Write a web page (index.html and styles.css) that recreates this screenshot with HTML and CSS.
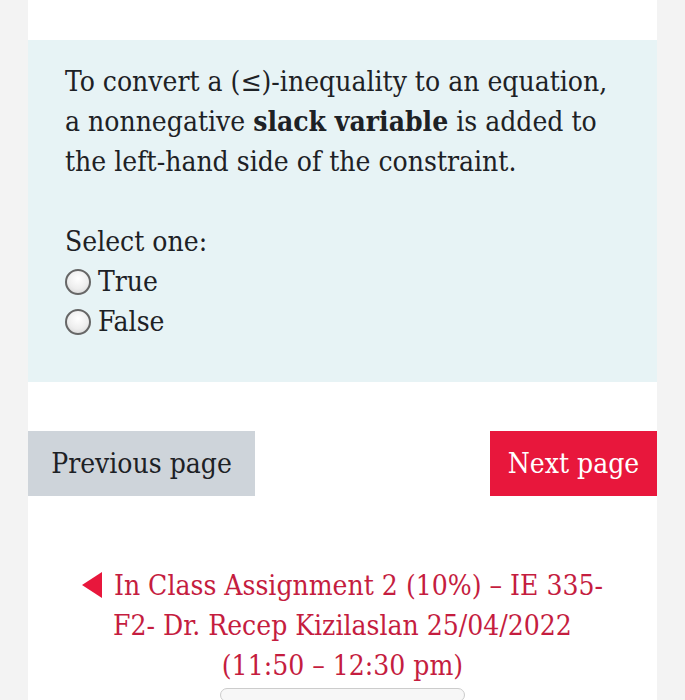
FILE: index.html
```html
<!DOCTYPE html>
<html>
<head>
<meta charset="utf-8">
<link rel="stylesheet" href="styles.css">
</head>
<body>
<div class="page">
  <div class="top"></div>
  <div class="question">
    <p class="qtext">To convert a (≤)-inequality to an equation, a nonnegative <b>slack variable</b> is added to the left-hand side of the constraint.</p>
    <div class="prompt">Select one:</div>
    <label class="opt"><span class="radio"></span>True</label>
    <label class="opt"><span class="radio"></span>False</label>
  </div>
  <div class="nav">
    <button class="btn prev">Previous page</button>
    <button class="btn next">Next page</button>
  </div>
  <div class="back">
    <span class="tri"></span> In Class Assignment 2 (10%) – IE 335-F2- Dr. Recep Kizilaslan 25/04/2022 (11:50 – 12:30 pm)
  </div>
  <div class="pill"></div>
</div>
</body>
</html>
```

FILE: styles.css
```css
html, body { margin: 0; padding: 0; }
body {
  background: #f3f3f3;
  font-family: "DejaVu Serif Condensed", "DejaVu Serif", serif;
  color: #1d2125;
  height: 700px;
  overflow: hidden;
}
.page {
  margin: 0 28px;
  background: #fff;
  height: 700px;
  display: flex;
  flex-direction: column;
}
.top { height: 40px; flex: none; }
.question {
  flex: none;
  background: #e7f3f5;
  height: 342px;
  box-sizing: border-box;
  padding: 22px 30px 0 37px;
  font-size: 28px;
  line-height: 40px;
}
.qtext { margin: 0 0 40px 0; }
.qtext b { font-weight: bold; }
.opt { display: flex; align-items: center; gap: 7px; }
.radio {
  width: 26px; height: 26px; box-sizing: border-box;
  border: 2px solid #666;
  border-radius: 50%;
  background: radial-gradient(circle at 50% 35%, #fff 0%, #eee 55%, #d0d0d0 100%);
}
.nav {
  flex: none;
  display: flex;
  justify-content: space-between;
  margin-top: 49px;
}
.btn {
  font-family: inherit;
  font-size: 28px;
  border: none;
  height: 65px;
  padding: 0;
}
.prev { background: #ced4da; color: #1d2125; width: 227px; }
.next { background: #e8173c; color: #fff; width: 167px; }
.back {
  flex: none;
  margin: 70px auto 0;
  width: 540px;
  text-align: center;
  color: #c51d3f;
  font-size: 28px;
  line-height: 40px;
}
.tri {
  display: inline-block;
  width: 0; height: 0;
  border-top: 13px solid transparent;
  border-bottom: 13px solid transparent;
  border-right: 20px solid #e8173c;
  vertical-align: -3px;
  margin-right: 4px;
}
.pill {
  flex: none;
  margin: 2px auto 0;
  width: 245px;
  height: 14px;
  border: 1px solid #ccc;
  border-radius: 8px;
  background: #f7f7f7;
  box-sizing: border-box;
}
```
